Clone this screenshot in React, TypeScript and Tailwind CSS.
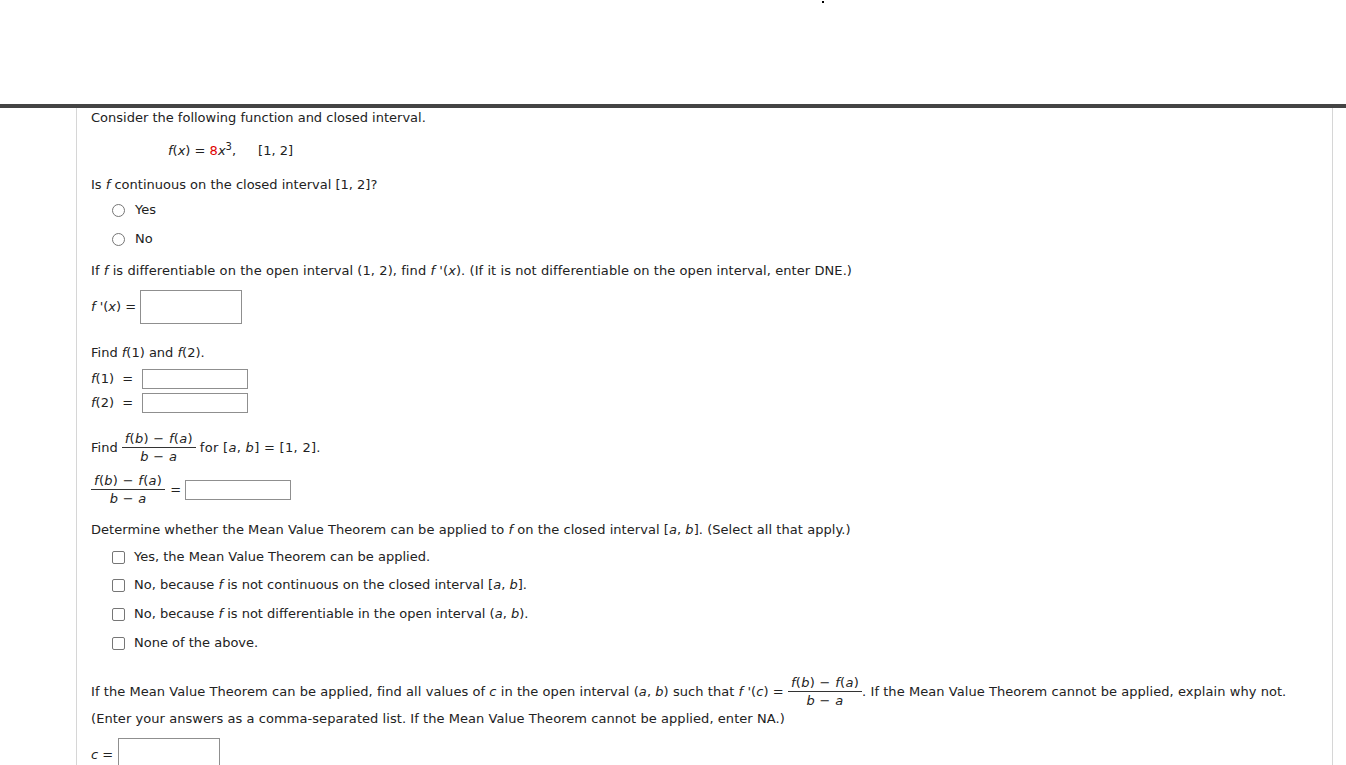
import type { ReactNode } from 'react';

function Frac({ num, den }: { num: ReactNode; den: ReactNode }) {
  return (
    <span className="inline-flex flex-col items-center align-middle leading-[17px]">
      <span className="px-[3px] tracking-[0.3px]">{num}</span>
      <span className="self-stretch border-t border-[#333]" />
      <span className="px-[3px] tracking-[0.3px]">{den}</span>
    </span>
  );
}

function I({ children }: { children: ReactNode }) {
  return <i className="italic">{children}</i>;
}

function Radio({ label }: { label: string }) {
  return (
    <div className="flex h-[18px] items-center pl-[21px]">
      <span className="h-[13px] w-[13px] rounded-full border border-[#767676] bg-white" />
      <span className="ml-[10px]">{label}</span>
    </div>
  );
}

function Check({ children }: { children: ReactNode }) {
  return (
    <div className="flex h-[18px] items-center pl-[21px]">
      <span className="h-[13px] w-[13px] rounded-[2px] border border-[#767676] bg-white" />
      <span className="ml-[9px]">{children}</span>
    </div>
  );
}

const fab = (
  <>
    <I>f</I>(<I>b</I>) − <I>f</I>(<I>a</I>)
  </>
);
const bma = (
  <>
    <I>b</I> − <I>a</I>
  </>
);

export default function App() {
  return (
    <div className="min-h-screen bg-white text-[13px] leading-[18px] text-[#222]" style={{ fontFamily: '"DejaVu Sans", Verdana, sans-serif' }}>
      <div className="relative h-[104px]">
        <span className="absolute left-[822px] top-[1px] h-[2px] w-[2px] bg-black" />
      </div>
      <div className="h-[4px] bg-[#444]" />
      <div className="ml-[76px] mr-[13px] border-l border-r border-[#d6d6d6] pb-[20px] pl-[14px] pt-[1px]">
        <p>Consider the following function and closed interval.</p>

        <p className="mt-[15px] pl-[77px]">
          <I>f</I>(<I>x</I>) = <span className="text-[#e00000]">8</span><I>x</I>
          <sup className="text-[10px]">3</sup>,<span className="inline-block w-[22px]" />[1, 2]
        </p>

        <p className="mt-[16px]">
          Is <I>f</I> continuous on the closed interval [1, 2]?
        </p>
        <div className="mt-[7px]">
          <Radio label="Yes" />
        </div>
        <div className="mt-[11px]">
          <Radio label="No" />
        </div>

        <p className="mt-[14px] tracking-[0.08px]">
          If <I>f</I> is differentiable on the open interval (1, 2), find <I>f</I> '(<I>x</I>). (If it is not
          differentiable on the open interval, enter DNE.)
        </p>
        <div className="mt-[10px] flex items-center">
          <span>
            <I>f</I> '(<I>x</I>) =
          </span>
          <span className="ml-[4px] h-[34px] w-[102px] border border-[#8f8f8f]" />
        </div>

        <p className="mt-[20px]">
          Find <I>f</I>(1) and <I>f</I>(2).
        </p>
        <div className="mt-[7px] flex h-[20px] items-center">
          <span className="w-[51px]">
            <I>f</I>(1) &nbsp;=
          </span>
          <span className="h-[20px] w-[106px] border border-[#8f8f8f]" />
        </div>
        <div className="mt-[4px] flex h-[20px] items-center">
          <span className="w-[51px]">
            <I>f</I>(2) &nbsp;=
          </span>
          <span className="h-[20px] w-[106px] border border-[#8f8f8f]" />
        </div>

        <div className="mt-[17px] flex items-center">
          <span className="mr-[4px]">Find</span>
          <Frac num={fab} den={bma} />
          <span className="ml-[4px] tracking-[0.3px]">
            for [<I>a</I>, <I>b</I>] = [1, 2].
          </span>
        </div>
        <div className="mt-[7px] flex items-center">
          <Frac num={fab} den={bma} />
          <span className="ml-[5px]">=</span>
          <span className="ml-[4px] h-[20px] w-[106px] border border-[#8f8f8f]" />
        </div>

        <p className="mt-[14px] tracking-[0.05px]">
          Determine whether the Mean Value Theorem can be applied to <I>f</I> on the closed interval [<I>a</I>,{' '}
          <I>b</I>]. (Select all that apply.)
        </p>
        <div className="mt-[9px]">
          <Check>Yes, the Mean Value Theorem can be applied.</Check>
        </div>
        <div className="mt-[10px]">
          <Check>
            No, because <I>f</I> is not continuous on the closed interval [<I>a</I>, <I>b</I>].
          </Check>
        </div>
        <div className="mt-[11px]">
          <Check>
            No, because <I>f</I> is not differentiable in the open interval (<I>a</I>, <I>b</I>).
          </Check>
        </div>
        <div className="mt-[11px]">
          <Check>None of the above.</Check>
        </div>

        <div className="mt-[22px] flex items-center tracking-[0.06px]">
          <span className="whitespace-pre">
            If the Mean Value Theorem can be applied, find all values of <I>c</I> in the open interval (<I>a</I>,{' '}
            <I>b</I>) such that <I>f</I> '(<I>c</I>) ={' '}
          </span>
          <Frac num={fab} den={bma} />
          <span className="whitespace-pre">. If the Mean Value Theorem cannot be applied, explain why not.</span>
        </div>
        <p className="mt-[1px] tracking-[0.06px]">
          (Enter your answers as a comma-separated list. If the Mean Value Theorem cannot be applied, enter NA.)
        </p>
        <div className="mt-[10px] flex items-center">
          <span>
            <I>c</I> =
          </span>
          <span className="ml-[5px] h-[34px] w-[102px] border border-[#8f8f8f]" />
        </div>
      </div>
    </div>
  );
}
